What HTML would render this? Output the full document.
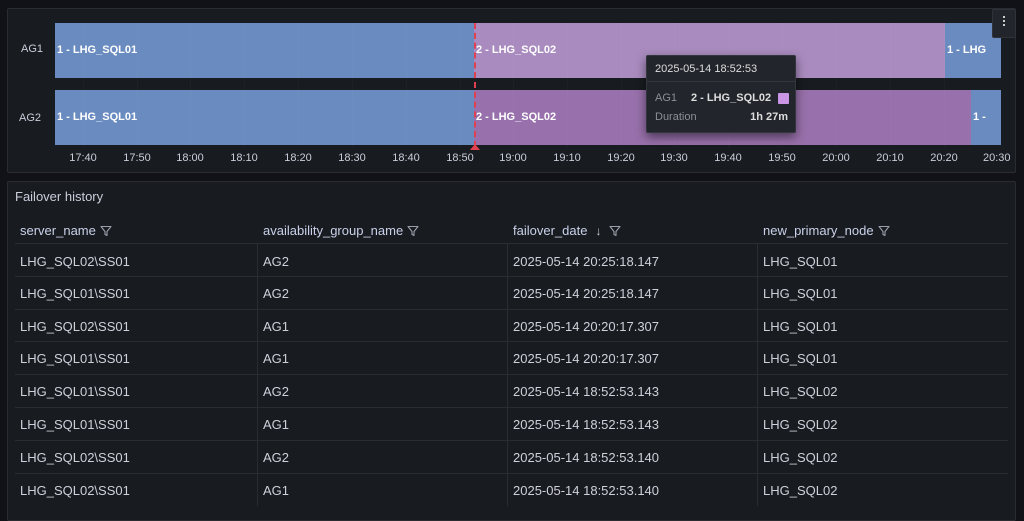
<!DOCTYPE html>
<html><head><meta charset="utf-8"><style>
*{margin:0;padding:0;box-sizing:border-box}
body{width:1024px;height:511px;background:#111217;font-family:"Liberation Sans",sans-serif;color:#ccccdc;position:relative;overflow:hidden;font-size:13px}
.abs{position:absolute}
.panel{position:absolute;background:#181b1f;border:1px solid #2a2c31;border-radius:2px}
.bar{position:absolute;height:55px;color:#fff;font-weight:bold;font-size:11px;line-height:55px;padding-left:2px;white-space:nowrap;overflow:hidden}
.tick{position:absolute;top:152px;font-size:11px;color:#ccccdc;transform:translateX(-50%)}
.grid{position:absolute;top:23px;height:124px;width:1px;background:rgba(255,255,255,0.025)}
.th{position:absolute;top:223px;font-size:13px;color:#c9d1ea;display:flex;align-items:center;gap:4px}
.th svg{display:block}
.cell{position:absolute;font-size:13px;color:#d0d0dc}
.hr{position:absolute;left:15px;width:993px;height:1px;background:#2a2c31}
.vr{position:absolute;top:244px;height:262px;width:1px;background:#2a2c31}
</style></head><body>
<div class="panel" style="left:7px;top:8px;width:1009px;height:165px"></div>
<div class="abs" style="left:21px;top:43px;font-size:11px">AG1</div>
<div class="abs" style="left:19px;top:112px;font-size:11px">AG2</div>

<div class="bar" style="left:55px;top:23px;width:419px;background:#6a8bc0">1 - LHG_SQL01</div>
<div class="bar" style="left:474px;top:23px;width:471px;background:#a98bbf">2 - LHG_SQL02</div>
<div class="bar" style="left:945px;top:23px;width:56px;background:#6a8bc0">1 - LHG</div>
<div class="bar" style="left:55px;top:90px;width:419px;background:#6a8bc0">1 - LHG_SQL01</div>
<div class="bar" style="left:474px;top:90px;width:497px;background:#9870ab">2 - LHG_SQL02</div>
<div class="bar" style="left:971px;top:90px;width:30px;background:#6a8bc0">1 -</div>

<div class="grid" style="left:83px"></div><div class="grid" style="left:137px"></div><div class="grid" style="left:190px"></div><div class="grid" style="left:244px"></div><div class="grid" style="left:298px"></div><div class="grid" style="left:352px"></div><div class="grid" style="left:406px"></div><div class="grid" style="left:460px"></div><div class="grid" style="left:513px"></div><div class="grid" style="left:567px"></div><div class="grid" style="left:621px"></div><div class="grid" style="left:674px"></div><div class="grid" style="left:728px"></div><div class="grid" style="left:782px"></div><div class="grid" style="left:836px"></div><div class="grid" style="left:890px"></div><div class="grid" style="left:944px"></div>

<div class="abs" style="left:474px;top:23px;height:124px;border-left:2px dashed #e0404f"></div>
<div class="abs" style="left:470px;top:144px;width:0;height:0;border-left:5px solid transparent;border-right:5px solid transparent;border-bottom:6px solid #e0404f"></div>

<div class="tick" style="left:83px">17:40</div><div class="tick" style="left:137px">17:50</div><div class="tick" style="left:190px">18:00</div><div class="tick" style="left:244px">18:10</div><div class="tick" style="left:298px">18:20</div><div class="tick" style="left:352px">18:30</div><div class="tick" style="left:406px">18:40</div><div class="tick" style="left:460px">18:50</div><div class="tick" style="left:513px">19:00</div><div class="tick" style="left:567px">19:10</div><div class="tick" style="left:621px">19:20</div><div class="tick" style="left:674px">19:30</div><div class="tick" style="left:728px">19:40</div><div class="tick" style="left:782px">19:50</div><div class="tick" style="left:836px">20:00</div><div class="tick" style="left:890px">20:10</div><div class="tick" style="left:944px">20:20</div><div class="abs" style="left:983px;top:152px;font-size:11px;width:28px;overflow:hidden;white-space:nowrap">20:30</div>

<div class="abs" style="left:992px;top:9px;width:24px;height:29px;background:#22252b;border:1px solid #2f3238;border-radius:2px"></div>
<div class="abs" style="left:1003px;top:16px;width:2px;height:2px;background:#ccc;box-shadow:0 4px 0 #ccc,0 8px 0 #ccc"></div>

<div class="abs" style="left:646px;top:55px;width:150px;height:78px;background:#22252b;border:1px solid #33363c;border-radius:2px;box-shadow:0 4px 10px rgba(0,0,0,.5)">
 <div style="position:absolute;left:8px;top:7px;font-size:11px;color:#ddd">2025-05-14 18:52:53</div>
 <div style="position:absolute;left:0;top:25px;width:148px;height:1px;background:#33363c"></div>
 <div style="position:absolute;left:8px;top:36px;font-size:11px;color:#8e8e97">AG1</div>
 <div style="position:absolute;left:44px;top:36px;font-size:11px;font-weight:bold;color:#ddd">2 - LHG_SQL02</div>
 <div style="position:absolute;left:131px;top:37px;width:11px;height:11px;background:#ca95e5;border-radius:1px"></div>
 <div style="position:absolute;left:8px;top:55px;font-size:11px;color:#8e8e97">Duration</div>
 <div style="position:absolute;right:7px;top:55px;font-size:11px;font-weight:bold;color:#ddd">1h 27m</div>
</div>

<div class="panel" style="left:7px;top:181px;width:1009px;height:340px"></div>
<div class="abs" style="left:15px;top:189px;font-size:13px;color:#ccccdc">Failover history</div>

<div class="th" style="left:20px">server_name <svg width="12" height="12" viewBox="0 0 12 12"><path d="M1 1.5h10L7 6.5v4l-2-1v-3z" fill="none" stroke="#9aa0ab" stroke-width="1.1" stroke-linejoin="round"/></svg></div>
<div class="th" style="left:263px">availability_group_name <svg width="12" height="12" viewBox="0 0 12 12"><path d="M1 1.5h10L7 6.5v4l-2-1v-3z" fill="none" stroke="#9aa0ab" stroke-width="1.1" stroke-linejoin="round"/></svg></div>
<div class="th" style="left:513px">failover_date <span style="color:#ccc;font-size:12px;margin:0 4px">↓</span><svg width="12" height="12" viewBox="0 0 12 12"><path d="M1 1.5h10L7 6.5v4l-2-1v-3z" fill="none" stroke="#9aa0ab" stroke-width="1.1" stroke-linejoin="round"/></svg></div>
<div class="th" style="left:763px">new_primary_node <svg width="12" height="12" viewBox="0 0 12 12"><path d="M1 1.5h10L7 6.5v4l-2-1v-3z" fill="none" stroke="#9aa0ab" stroke-width="1.1" stroke-linejoin="round"/></svg></div>

<div class="hr" style="top:243px"></div><div class="hr" style="top:276px"></div><div class="hr" style="top:309px"></div><div class="hr" style="top:341px"></div><div class="hr" style="top:374px"></div><div class="hr" style="top:407px"></div><div class="hr" style="top:440px"></div><div class="hr" style="top:473px"></div>
<div class="vr" style="left:257px"></div><div class="vr" style="left:507px"></div><div class="vr" style="left:757px"></div>

<div class="cell" style="left:20px;top:254px">LHG_SQL02\SS01</div><div class="cell" style="left:263px;top:254px">AG2</div><div class="cell" style="left:513px;top:254px">2025-05-14 20:25:18.147</div><div class="cell" style="left:763px;top:254px">LHG_SQL01</div>
<div class="cell" style="left:20px;top:286px">LHG_SQL01\SS01</div><div class="cell" style="left:263px;top:286px">AG2</div><div class="cell" style="left:513px;top:286px">2025-05-14 20:25:18.147</div><div class="cell" style="left:763px;top:286px">LHG_SQL01</div>
<div class="cell" style="left:20px;top:319px">LHG_SQL02\SS01</div><div class="cell" style="left:263px;top:319px">AG1</div><div class="cell" style="left:513px;top:319px">2025-05-14 20:20:17.307</div><div class="cell" style="left:763px;top:319px">LHG_SQL01</div>
<div class="cell" style="left:20px;top:351px">LHG_SQL01\SS01</div><div class="cell" style="left:263px;top:351px">AG1</div><div class="cell" style="left:513px;top:351px">2025-05-14 20:20:17.307</div><div class="cell" style="left:763px;top:351px">LHG_SQL01</div>
<div class="cell" style="left:20px;top:384px">LHG_SQL01\SS01</div><div class="cell" style="left:263px;top:384px">AG2</div><div class="cell" style="left:513px;top:384px">2025-05-14 18:52:53.143</div><div class="cell" style="left:763px;top:384px">LHG_SQL02</div>
<div class="cell" style="left:20px;top:417px">LHG_SQL01\SS01</div><div class="cell" style="left:263px;top:417px">AG1</div><div class="cell" style="left:513px;top:417px">2025-05-14 18:52:53.143</div><div class="cell" style="left:763px;top:417px">LHG_SQL02</div>
<div class="cell" style="left:20px;top:450px">LHG_SQL02\SS01</div><div class="cell" style="left:263px;top:450px">AG2</div><div class="cell" style="left:513px;top:450px">2025-05-14 18:52:53.140</div><div class="cell" style="left:763px;top:450px">LHG_SQL02</div>
<div class="cell" style="left:20px;top:483px">LHG_SQL02\SS01</div><div class="cell" style="left:263px;top:483px">AG1</div><div class="cell" style="left:513px;top:483px">2025-05-14 18:52:53.140</div><div class="cell" style="left:763px;top:483px">LHG_SQL02</div>
</body></html>
